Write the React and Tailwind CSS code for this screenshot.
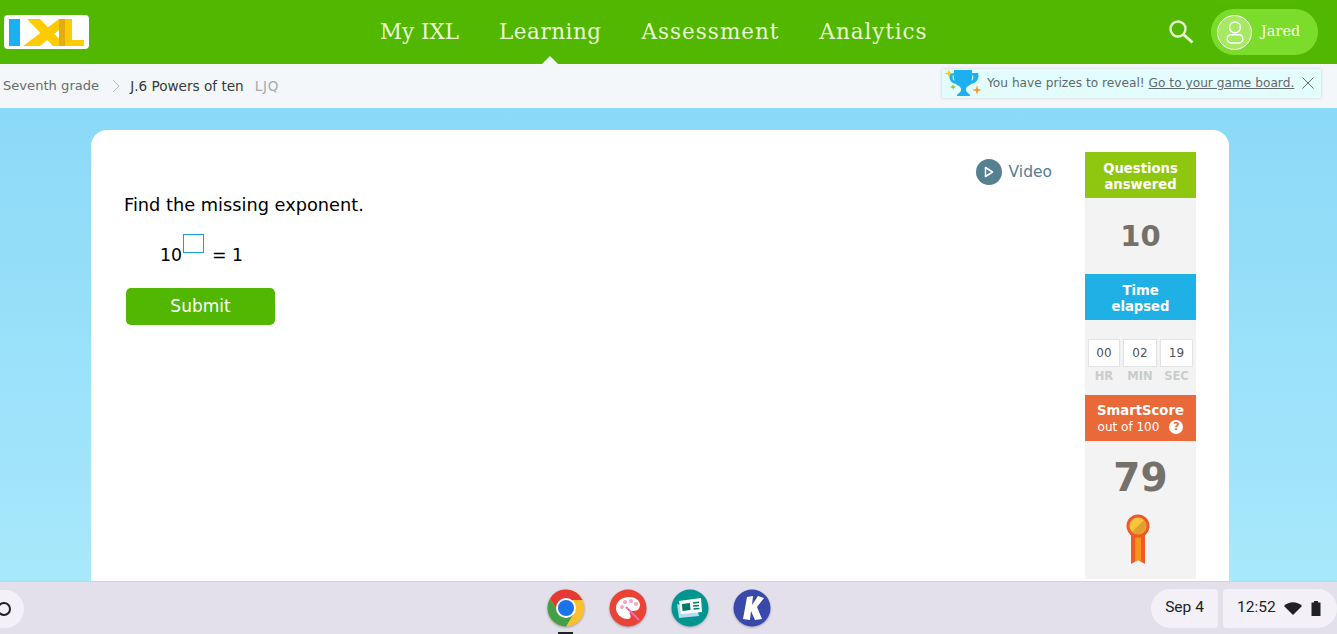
import React from 'react';

const VERDANA = "font-['DejaVu_Sans',sans-serif]";

const Logo = () => (
  <div className="ml-1 w-[85px] h-[34px] bg-white rounded-[4px] flex items-center pl-[5px]">
    <svg width="76" height="27" viewBox="0 0 76 27">
      <rect x="0" y="0" width="11" height="27" fill="#1cb0f0" />
      <polygon points="18,0 31,0 57,27 44,27" fill="#fecb00" />
      <polygon points="50,0 63,0 31,27 14,27" fill="#fecb00" />
      <polygon points="50,0 63,0 63,21 75,21 75,27 50,27" fill="#fecb00" />
      <polygon points="50,0 56,0 56,27 50,27" fill="#e3ad12" />
    </svg>
  </div>
);

const NavLink = ({ label, active, tracking }) => (
  <a className={`relative h-16 flex items-center text-[21.500px] text-[#e9f7d6] font-['DejaVu_Serif',serif] font-extralight whitespace-nowrap ${tracking}`}>
    {label}
    {active && (
      <span className="absolute bottom-0 left-1/2 -ml-2 w-0 h-0 border-x-8 border-x-transparent border-b-8 border-b-[#f3f7fa]" />
    )}
  </a>
);

const TopBar = () => (
  <div className="h-16 shrink-0 bg-[#51b700] flex items-center">
    <Logo />
    <div className="ml-[291px] flex gap-10">
      <NavLink label="My IXL" tracking="tracking-normal" />
      <NavLink label="Learning" tracking="tracking-[0.5px]" active />
      <NavLink label="Assessment" tracking="tracking-[1px]" />
      <NavLink label="Analytics" tracking="tracking-[0.9px]" />
    </div>
    <svg className="ml-auto" width="26" height="26" viewBox="0 0 26 26" fill="none" stroke="#e6f5d0" strokeWidth="2.4">
      <circle cx="10" cy="10" r="7.5" />
      <path d="M15.5 15.5 L24.5 23.5" strokeWidth="3" />
    </svg>
    <div className="ml-[17px] mr-[19px] w-[107px] h-[46px] rounded-full bg-[#7cdc2c] flex items-center pl-[6px]">
      <div className="w-[35px] h-[35px] rounded-full bg-[#a5ea62] border border-white flex items-center justify-center">
        <svg width="20" height="24" viewBox="0 0 22 26" fill="none" stroke="white" strokeWidth="1.6">
          <circle cx="11" cy="8" r="6" />
          <rect x="2.5" y="16" width="17" height="9" rx="4" />
        </svg>
      </div>
      <span className="ml-[9px] text-[14.500px] text-[#f2fbe6] font-['DejaVu_Serif',serif]">Jared</span>
    </div>
  </div>
);

const Trophy = () => (
  <svg width="40" height="28" viewBox="0 0 40 28">
    <path d="M11 1 L29 1 L29 4 L35 4 C37 10 33 14 28 15 C26 17 23 17.500 23 20 L23 22 L27 26 L27 27 L14 27 L14 26 L18 22 L18 20 C18 17.500 15 17 13 15 C8 14 5 10 7 4 L11 4 Z M10 6 C9 9 10 11 11.500 12 L10.500 6 Z M30 6 C31 9 30 11 28.500 12 L29.500 6 Z" fill="#1cb0f0" fillRule="evenodd" />
    <path d="M6 0 L7 3.500 L11 4.500 L7 5.500 L6 9 L5 5.500 L1 4.500 L5 3.500 Z" fill="#fecb00" />
    <path d="M10 15 L10.700 17 L13 18 L10.700 19 L10 21 L9.300 19 L7 18 L9.300 17 Z" fill="#8cc63f" />
    <path d="M34 16 L35 20 L39 21 L35 22 L34 26 L33 22 L29 21 L33 20 Z" fill="#f7941d" />
  </svg>
);

const SubBar = () => (
  <div className={`h-11 shrink-0 bg-[#f3f7fa] flex items-center text-[13.100px] ${VERDANA}`}>
    <span className="ml-[3px] text-[#666d70]">Seventh grade</span>
    <svg className="ml-[13px]" width="9" height="14" viewBox="0 0 9 14" fill="none" stroke="#b5b9bb" strokeWidth="1">
      <path d="M1 1 L7 7 L1 13" />
    </svg>
    <span className="ml-[9px] text-[13.600px] text-[#33393c]">J.6 Powers of ten</span>
    <span className="ml-[11px] text-[13.500px] tracking-[0.8px] text-[#a6aaab]">LJQ</span>
    <div className="ml-auto mr-[16px] mb-[6px] w-[379px] h-[29px] bg-[#e3fdfe] shadow-[0_0_3px_rgba(0,0,0,0.15)] flex items-center text-[#62696c]">
      <div className="ml-[1px] w-[44px] shrink-0"><Trophy /></div>
      <span className="mt-[1px] text-[12.200px] whitespace-nowrap">
        You have prizes to reveal! <a className="underline">Go to your game board.</a>
      </span>
      <svg className="ml-auto mr-[7px]" width="12" height="12" viewBox="0 0 12 12" stroke="#666d70" strokeWidth="1">
        <path d="M0.500 0.500 L11.500 11.500 M11.500 0.500 L0.500 11.500" />
      </svg>
    </div>
  </div>
);

const StatHeader = ({ color, children }) => (
  <div className={`h-[46px] pt-1 flex flex-col items-center justify-center text-white text-[13.200px] leading-4 font-bold text-center ${color}`}>
    {children}
  </div>
);

const TimeBox = ({ value, label, width }) => (
  <div className={`flex flex-col items-center ${width}`}>
    <div className="w-full h-7 bg-white border border-[#e3e3e3] flex items-center justify-center text-[12px] text-[#4b5356]">
      {value}
    </div>
    <div className="mt-[1px] text-[11.500px] font-bold leading-4 text-[#c9cdcd]">{label}</div>
  </div>
);

const Ribbon = () => (
  <svg width="24" height="50" viewBox="0 0 24 50">
    <path d="M5 20 L19 20 L19 50 L12 46 L5 50 Z" fill="#f15a24" />
    <path d="M9 20 L15 20 L15 47 L12 46 L9 47 Z" fill="#f7941d" />
    <circle cx="12" cy="12" r="11.500" fill="#ec5a2a" />
    <circle cx="12" cy="12" r="8.500" fill="#f9c33c" />
    <path d="M18 6 A8.500 8.500 0 0 1 6 18 Z" fill="#e0a030" />
  </svg>
);

const Sidebar = () => (
  <div className="w-[111px] shrink-0 h-[427px] bg-[#f3f3f3]">
    <StatHeader color="bg-[#8fc610]">
      <span>Questions</span>
      <span>answered</span>
    </StatHeader>
    <div className="h-[76px] pt-[2px] flex items-center justify-center text-[29px] font-bold text-[#75706a]">10</div>
    <StatHeader color="bg-[#1fb1e6]">
      <span>Time</span>
      <span>elapsed</span>
    </StatHeader>
    <div className="h-[75px] pt-[19px] pl-[3px] flex gap-[3px]">
      <TimeBox value="00" label="HR" width="w-8" />
      <TimeBox value="02" label="MIN" width="w-[34px]" />
      <TimeBox value="19" label="SEC" width="w-[33px]" />
    </div>
    <div className="h-[46px] bg-[#e96a38] text-white flex flex-col items-center justify-center">
      <span className="text-[13.200px] font-bold leading-[17px]">SmartScore</span>
      <span className="text-[12px] leading-4 flex items-center">
        out of 100
        <span className="ml-[10px] w-[14px] h-[14px] rounded-full bg-white text-[#e96a38] text-[11px] font-bold flex items-center justify-center">?</span>
      </span>
    </div>
    <div className="mt-[13px] text-center text-[39px] leading-[48px] font-bold text-[#75706a]">79</div>
    <div className="mt-[12px] pr-[5px] flex justify-center"><Ribbon /></div>
  </div>
);

const Question = () => (
  <div className="flex-1 relative">
    <div className="flex justify-end items-center h-10 pr-[33px] text-[#54808f] text-[15.500px]">
      <span className="w-[26px] h-[26px] rounded-full bg-[#54808f] flex items-center justify-center">
        <svg width="10" height="12" viewBox="0 0 10 12" fill="none" stroke="white" strokeWidth="1.500">
          <path d="M1.500 1.500 L8.500 6 L1.500 10.500 Z" strokeLinejoin="round" />
        </svg>
      </span>
      <span className="ml-[7px] mt-[1px]">Video</span>
    </div>
    <p className="mt-[1px] ml-[33px] text-[17.750px] leading-6 text-black">Find the missing exponent.</p>
    <div className="ml-[69px] mt-[19px] h-[30px] flex items-end text-[17.300px] leading-[22px] text-black">
      <span>10</span>
      <span className="mb-[13px] ml-[1px] w-[21px] h-[19px] border border-[#1c9be6] bg-white" />
      <span className="ml-[8px]">= 1</span>
    </div>
    <button className="mt-[22px] ml-[35px] block w-[149px] h-[37px] bg-[#51b700] rounded-[5px] text-white text-[17px]">Submit</button>
  </div>
);

const ChromeIcon = () => (
  <svg className="drop-shadow-[0_1px_1px_rgba(0,0,0,0.3)]" width="38" height="38" viewBox="0 0 38 38">
    <circle cx="19" cy="19" r="18.500" fill="#fbc02d" />
    <path d="M19 .5 A18.500 18.500 0 0 0 3 9.750 L11 23 L19 11 L35.500 11 A18.500 18.500 0 0 0 19 .5 Z" fill="#e53935" />
    <path d="M3 9.750 A18.500 18.500 0 0 0 19 37.500 L27 24 L11 23 Z" fill="#43a047" />
    <circle cx="19" cy="19" r="10" fill="white" />
    <circle cx="19" cy="19" r="8" fill="#1a73e8" />
  </svg>
);

const PaletteIcon = () => (
  <svg className="drop-shadow-[0_1px_1px_rgba(0,0,0,0.3)]" width="38" height="38" viewBox="0 0 38 38">
    <circle cx="19" cy="19" r="18.500" fill="#ea4335" />
    <path d="M20 8 C12 8 7 13 7 19 C7 25 12 30 19 30 C22 30 22 27 21 25.500 C20 23 22 22 24 22 C29 22 31 19 31 16 C31 11 26 8 20 8 Z" fill="white" />
    <circle cx="13" cy="18" r="2" fill="#f5a3c7" />
    <circle cx="16" cy="13" r="2" fill="#f5a3c7" />
    <circle cx="22" cy="12" r="2" fill="#f5a3c7" />
    <circle cx="27" cy="15" r="2" fill="#f5a3c7" />
    <path d="M17 18 L30 31" stroke="#f06fa8" strokeWidth="2" />
  </svg>
);

const CardIcon = () => (
  <svg className="drop-shadow-[0_1px_1px_rgba(0,0,0,0.3)]" width="38" height="38" viewBox="0 0 38 38">
    <circle cx="19" cy="19" r="18.500" fill="#00968f" />
    <path d="M6 15 L8 29 L28 27 L27 23 Z" fill="#b6dcf5" />
    <path d="M8 12 L30 9 L31 23 L10 25 Z" fill="white" />
    <path d="M11 15 L19 14 L19.500 21 L11.500 22 Z" fill="#00796b" />
    <path d="M22 14 L28 13.300 M22 17 L28 16.500 M22.500 20 L28.500 19.500" stroke="#00796b" strokeWidth="1.500" />
  </svg>
);

const KIcon = () => (
  <svg className="drop-shadow-[0_1px_1px_rgba(0,0,0,0.3)]" width="38" height="38" viewBox="0 0 38 38">
    <circle cx="19" cy="19" r="18.500" fill="#3949ab" />
    <path d="M14 8 L20 7 L19 16 L25 7 L31 9 L24 18 L29 30 L22 31 L18 22 L17 31 L10 30 Z" fill="white" />
  </svg>
);

const Shelf = () => (
  <div className="relative h-[53px] shrink-0 bg-[#e3e0ec] border-t border-[#d3d1d9] flex items-center">
    <div className="absolute left-[-16px] top-[8px] w-[40px] h-[38px] rounded-full bg-[#f3f1f7] flex items-center justify-center">
      <div className="w-[14px] h-[14px] rounded-full border-2 border-[#202124]" />
    </div>
    <div className="ml-[547px] flex gap-6 items-center">
      <div className="relative">
        <ChromeIcon />
        <span className="absolute left-[11px] bottom-[-7px] w-[15px] h-[2px] bg-[#202124]" />
      </div>
      <PaletteIcon />
      <CardIcon />
      <KIcon />
    </div>
    <div className="ml-auto flex gap-[5px] text-[15.500px] text-[#202124] font-['Roboto',sans-serif]">
      <div className="w-[67px] h-[39px] bg-[#f3f1f7] rounded-l-[20px] rounded-r-[4px] flex items-center justify-center">Sep 4</div>
      <div className="w-[114px] h-[39px] bg-[#f3f1f7] rounded-r-[20px] rounded-l-[4px] flex items-center pl-[14px]">
        12:52
        <svg className="ml-[8px]" width="18" height="13" viewBox="0 0 18 13"><path d="M0 4 C5 -1 13 -1 18 4 L9 13 Z" fill="#202124" /></svg>
        <svg className="ml-[9px]" width="10" height="15" viewBox="0 0 10 15"><path d="M3 0 H7 V1.500 H9.500 V15 H.5 V1.500 H3 Z" fill="#202124" /></svg>
      </div>
    </div>
  </div>
);

export default function App() {
  return (
    <div className={`w-[1337px] h-[634px] overflow-hidden flex flex-col ${VERDANA}`}>
      <TopBar />
      <SubBar />
      <main className="flex-1 min-h-0 overflow-hidden bg-gradient-to-b from-[#8bd9f8] to-[#a8e8fb] pt-[22px] pl-[91px]">
        <div className="w-[1138px] h-[500px] bg-white rounded-t-[16px] pt-[22px] pr-[33px] flex">
          <Question />
          <Sidebar />
        </div>
      </main>
      <Shelf />
    </div>
  );
}
